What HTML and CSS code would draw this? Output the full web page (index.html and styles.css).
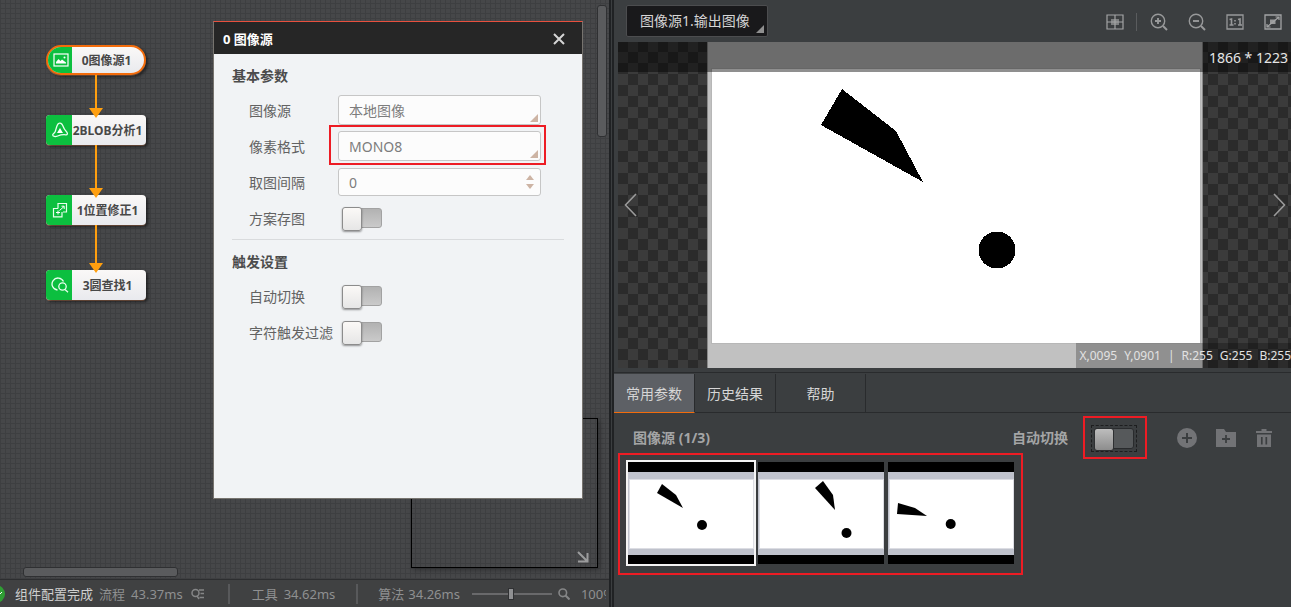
FILE: index.html
```html
<!DOCTYPE html>
<html lang="zh-CN">
<head>
<meta charset="utf-8">
<title>图像源</title>
<link rel="stylesheet" href="styles.css">
</head>
<body>
<div class="app">
  <section class="flow-pane">
    <div class="canvas">
      <div class="node node-source"><span class="node-icon"><svg width="16" height="14" viewBox="0 0 16 14"><rect x="1" y="1" width="14" height="12" fill="none" stroke="#fff" stroke-width="1.2"/><path d="M3 10.500V9l2.500-3 2 2 1.500-1.500 4 3v1z" fill="#fff"/><circle cx="11.500" cy="4.500" r="1" fill="#fff"/></svg></span><span class="node-label">0图像源1</span></div>
      <div class="node node-blob"><span class="node-icon"><svg width="18" height="16" viewBox="0 0 18 16"><path d="M7.500 1.500c1.500-1 3.500 0 4.200 2 .8 2.300 2 4.500 4 6.500 1.300 1.500.8 3-1 2.800-3-.3-5 0-8 1.200-2.500 1-5 .5-5-1 0-1.200 1.600-1.500 2.300-3C5 8 5.500 3 7.500 1.500z" fill="none" stroke="#e9ffee" stroke-width="1.300"/><path d="M9 6l3 5H6z" fill="#fff"/></svg></span><span class="node-label">2BLOB分析1</span></div>
      <div class="node node-fix"><span class="node-icon"><svg width="16" height="16" viewBox="0 0 16 16"><path d="M6 4.500V1.500h8.500v8.500h-3.500M4 6.500H1.500v8.300H10V12M6 4.500v2M4 6.500h2M10 10v2" fill="none" stroke="#e9ffee" stroke-width="1.200"/><path d="M6 8.500v4M4 10.500h4M7.500 8.500L12 4.500M9.500 4.200h2.700V7" fill="none" stroke="#fff"/></svg></span><span class="node-label">1位置修正1</span></div>
      <div class="node node-circle"><span class="node-icon"><svg width="18" height="16" viewBox="0 0 18 16"><path d="M12.500 4.500A6 6 0 1 0 6.500 13" fill="none" stroke="#e9ffee" stroke-width="1.300"/><circle cx="11.500" cy="9.500" r="3.700" fill="none" stroke="#e9ffee" stroke-width="1.300"/><path d="M14 12.500l3 2.700" stroke="#e9ffee" stroke-width="1.300"/></svg></span><span class="node-label">3圆查找1</span></div>
      <svg class="links" width="20" height="200" viewBox="0 0 20 200"><g fill="#ff9f0f"><path d="M9 0h2v34H9zM3 33h14l-7 10z"/><path d="M9 70h2v44H9zM3 113h14l-7 10z"/><path d="M9 150h2v39H9zM3 188h14l-7 10z"/></g></svg>

      <div class="scroll-v"></div>
      <div class="scroll-h"></div>
      <div class="minimap"><svg width="12" height="12" viewBox="0 0 12 12"><path d="M1 1l9 9M1 10.500h9.500V2" fill="none" stroke="#9b9c9d" stroke-width="2"/></svg></div>

      <form class="dialog">
        <header class="dialog-head">
          <h1>0 图像源</h1>
          <button class="close" type="button" aria-label="关闭"><svg width="14" height="14" viewBox="0 0 14 14"><path d="M2 2l10 10M12 2L2 12" stroke="#d5d5d5" stroke-width="2"/></svg></button>
        </header>
        <div class="dialog-body">
          <section class="group">
            <h2>基本参数</h2>
            <div class="row"><label for="src">图像源</label><div class="control corner"><select id="src"><option>本地图像</option></select></div></div>
            <div class="row"><label for="fmt">像素格式</label><div class="control corner"><select id="fmt"><option>MONO8</option></select><span class="mark mark-field"></span></div></div>
            <div class="row"><label for="gap">取图间隔</label><div class="control"><input class="number" id="gap" type="text" value="0"><span class="spin"><button type="button" aria-label="增加"></button><button type="button" aria-label="减少"></button></span></div></div>
            <div class="row"><label for="save">方案存图</label><input class="switch" id="save" type="checkbox"></div>
          </section>
          <section class="group">
            <h2>触发设置</h2>
            <div class="row"><label for="auto">自动切换</label><input class="switch" id="auto" type="checkbox"></div>
            <div class="row"><label for="filter">字符触发过滤</label><input class="switch" id="filter" type="checkbox"></div>
          </section>
        </div>
      </form>
    </div>
    <footer class="status">
      <svg class="ok" width="5" height="18" viewBox="0 0 5 18"><circle cx="-4" cy="9" r="9" fill="#2f9e34"/><path d="M-6 9l3 3 5-5" fill="none" stroke="#fff"/></svg>
      <span class="done">组件配置完成</span>
      <span class="metric">流程<b>43.37ms</b></span>
      <svg class="search-list" width="14" height="12" viewBox="0 0 14 12"><circle cx="4.500" cy="5" r="3.500" fill="none" stroke="#858687" stroke-width="1.500"/><path d="M6 8l2 3M8 2h5M9.500 5.500H13M8.500 9.500H13" fill="none" stroke="#858687" stroke-width="1.400"/></svg>
      <span class="metric divided">工具<b>34.62ms</b></span>
      <span class="metric divided last">算法<b>34.26ms</b></span>
      <input class="zoom" type="range" min="0" max="100" value="49" aria-label="缩放">
      <svg class="lens" width="12" height="12" viewBox="0 0 12 12"><circle cx="4.800" cy="4.800" r="3.800" fill="none" stroke="#858687" stroke-width="1.600"/><path d="M7.500 7.500l4 4" stroke="#858687" stroke-width="2"/></svg>
      <span class="percent">100%</span>
    </footer>
  </section>

  <section class="view-pane">
    <header class="toolbar">
      <button class="output" type="button">图像源1.输出图像</button>
      <div class="tools">
        <button type="button" aria-label="网格"><svg width="18" height="16" viewBox="0 0 18 16"><path d="M1 1h16v14H1zM9 1v14M1 8h16" fill="none" stroke="#a3a4a5" stroke-width="1.200"/><path d="M5 5h8v6H5z" fill="#a3a4a5" opacity=".65"/></svg></button>
        <i class="bar"></i>
        <button type="button" aria-label="放大"><svg width="18" height="18" viewBox="0 0 18 18"><circle cx="8" cy="8" r="6.700" fill="none" stroke="#98999a" stroke-width="1.400"/><path d="M5 8h6M8 5v6" stroke="#98999a" stroke-width="1.900"/><path d="M13 13l4 4" stroke="#98999a" stroke-width="2"/></svg></button>
        <button type="button" aria-label="缩小"><svg width="18" height="18" viewBox="0 0 18 18"><circle cx="8" cy="8" r="6.700" fill="none" stroke="#98999a" stroke-width="1.400"/><path d="M5 8h6" stroke="#98999a" stroke-width="1.900"/><path d="M13 13l4 4" stroke="#98999a" stroke-width="2"/></svg></button>
        <button type="button" aria-label="原始大小"><svg width="18" height="16" viewBox="0 0 18 16"><path d="M1 1h16v14H1z" fill="none" stroke="#98999a" stroke-width="1.300"/><path d="M3.500 5.500L5.500 5v6M12 5.500l2-.5v6M3.500 11h4M12 11h4M9 6v1.500M9 9v1.500" fill="none" stroke="#98999a" stroke-width="1.600"/></svg></button>
        <button type="button" aria-label="适应窗口"><svg width="18" height="16" viewBox="0 0 18 16"><path d="M1 1h16v14H1z" fill="none" stroke="#a3a4a5" stroke-width="1.300"/><path d="M6 5.500h5.500V10H6z" fill="#98999a"/><path d="M3 13L15 3M11.500 3H15v3M3 10v3h3.500" fill="none" stroke="#a3a4a5" stroke-width="1.200"/></svg></button>
      </div>
    </header>

    <div class="viewer">
      <svg class="picture" viewBox="0 0 496 326" preserveAspectRatio="none"><rect width="496" height="326" fill="#c1c1c1"/><path d="M.5 0v326M495.500 0v326" stroke="#8a8a8a"/><path d="M4 26h490v276H4z" fill="#b7b7b7"/><path d="M5 27h488v274H5z" fill="#fff"/><g shape-rendering="crispEdges"><path d="M135 47L114 83l102 57-27-51z"/><circle cx="290" cy="208" r="18.500"/></g></svg>
      <div class="size">1866 * 1223</div>
      <button class="prev" type="button" aria-label="上一张"><svg width="14" height="24" viewBox="0 0 14 24"><path d="M12 1L1.500 12 12 23" fill="none" stroke="#9a9a9a" stroke-width="1.600"/></svg></button>
      <button class="next" type="button" aria-label="下一张"><svg width="14" height="24" viewBox="0 0 14 24"><path d="M2 1l10.500 11L2 23" fill="none" stroke="#9a9a9a" stroke-width="1.600"/></svg></button>
      <div class="pixel"><span>X,0095</span><span>Y,0901</span><span>|</span><span>R:255</span><span>G:255</span><span>B:255</span></div>
    </div>

    <nav class="tabs">
      <button class="tab active" type="button">常用参数</button>
      <button class="tab" type="button">历史结果</button>
      <button class="tab wide" type="button">帮助</button>
    </nav>

    <div class="panel">
      <div class="panel-head">
        <h2>图像源 (1/3)</h2>
        <label for="loop">自动切换</label>
        <span class="loop"><input class="switch dark" id="loop" type="checkbox"><span class="mark mark-loop"></span></span>
        <button type="button" aria-label="添加图像"><svg width="20" height="20" viewBox="0 0 20 20"><circle cx="10" cy="10" r="10" fill="#727376"/><path d="M10 5v10M5 10h10" stroke="#3b3e40" stroke-width="2"/></svg></button>
        <button type="button" aria-label="添加文件夹"><svg width="20" height="18" viewBox="0 0 20 18"><path d="M0 0h8l2 3h10v15H0z" fill="#727376"/><path d="M10 6v8M6 10h8" stroke="#3b3e40" stroke-width="1.800"/></svg></button>
        <button type="button" aria-label="删除"><svg width="18" height="20" viewBox="0 0 18 20"><path d="M6.500 1h5v2H17v2H1V3h5.500zM2 6.500h14V19H2z" fill="#727376"/><path d="M6.800 9v7.500M11.300 9v7.500" stroke="#3b3e40" stroke-width="1.700"/></svg></button>
      </div>
      <div class="thumbs">
        <button class="thumb selected" type="button" aria-label="图像 1"><svg width="126" height="102" viewBox="0 0 126 102"><path d="M0 0h126v102H0z"/><path d="M0 10h126v83H0z" fill="#bfc2cc"/><path d="M1 17h125v70H1z" fill="#dcdde3"/><path d="M2 18h123v68H2z" fill="#fff"/><path d="M34 22l-5 9 26 15-7-13z"/><circle cx="74" cy="63" r="5"/></svg></button>
        <button class="thumb" type="button" aria-label="图像 2"><svg width="126" height="102" viewBox="0 0 126 102"><path d="M0 0h126v102H0z"/><path d="M0 10h126v83H0z" fill="#bfc2cc"/><path d="M1 17h125v70H1z" fill="#dcdde3"/><path d="M2 18h123v68H2z" fill="#fff"/><path d="M65 19l-8 7 20 22-2-15z"/><circle cx="88.500" cy="71" r="5"/></svg></button>
        <button class="thumb" type="button" aria-label="图像 3"><svg width="126" height="102" viewBox="0 0 126 102"><path d="M0 0h126v102H0z"/><path d="M0 10h126v83H0z" fill="#bfc2cc"/><path d="M1 17h125v70H1z" fill="#dcdde3"/><path d="M2 18h123v68H2z" fill="#fff"/><path d="M10 41l-1 11 30 2-12-8z"/><circle cx="62.700" cy="62" r="5"/></svg></button>
        <span class="mark mark-thumbs"></span>
      </div>
    </div>
  </section>
</div>
</body>
</html>
```
FILE: styles.css
```css
* { box-sizing: border-box; }

body {
  margin: 0;
  font: 14px/20px "Noto Sans", "Noto Sans CJK SC", sans-serif;
  background: #3b3e40;
}

h1, h2 { margin: 0; font-size: 14px; line-height: 20px; font-weight: 700; }
svg { display: block; }

button, input, select { font: inherit; margin: 0; }
button { padding: 0; border: 0; background: none; color: inherit; }

.app {
  display: grid;
  grid-template-columns: minmax(0, 614fr) minmax(0, 677fr);
  height: 100vh;
}

/* flow editor */
.flow-pane {
  display: flex;
  flex-direction: column;
  min-height: 0;
  border-right: 5px double #202224;
  overflow: hidden;
}

.canvas {
  position: relative;
  flex: 1;
  min-height: 0;
  background:
    repeating-linear-gradient(0deg, #3e3f41 0 1px, transparent 1px 5px),
    repeating-linear-gradient(90deg, #3e3f41 0 1px, transparent 1px 5px),
    #464749;
}

.node {
  position: absolute;
  left: 46px;
  display: flex;
  width: 100px;
  height: 30px;
  border-radius: 4px;
  overflow: hidden;
  background: linear-gradient(#faf8f7, #e9eaee);
  box-shadow: 2px 2px 3px rgba(0, 0, 0, .5), 0 1px 0 #a8775c;
  color: #484848;
  font-size: 12px;
  font-weight: 700;
}
.node-source { top: 45px; border: 2px solid #f36c0c; border-radius: 15px; }
.node-blob { top: 115px; }
.node-fix { top: 195px; }
.node-circle { top: 270px; }
.node-icon {
  display: flex;
  flex: 0 0 26px;
  align-items: center;
  justify-content: center;
  padding-left: 2px;
  background: #0cbf3f;
}
.node-source .node-icon { flex-basis: 24px; }
.node-label {
  display: flex;
  flex: 1;
  align-items: center;
  justify-content: center;
  padding: 2px 3px 0 0;
  white-space: nowrap;
}
.links { position: absolute; left: 86px; top: 75px; }

.scroll-v, .scroll-h {
  position: absolute;
  border: 1px solid #2f3032;
  border-radius: 3px;
  background: #5a5b5d;
}
.scroll-v { top: 5px; right: 2px; width: 10px; height: 132px; }
.scroll-h { left: 23px; bottom: 2px; width: 155px; height: 10px; }

.minimap {
  position: absolute;
  right: 11px;
  bottom: 11px;
  display: flex;
  align-items: flex-end;
  justify-content: flex-end;
  width: 187px;
  height: 150px;
  padding: 0 8px 4px;
  border: 1px solid #000;
  box-shadow: 2px 2px 5px rgba(0, 0, 0, .3);
}

/* parameter dialog */
.dialog {
  position: absolute;
  left: 213px;
  top: 21px;
  width: 370px;
  height: 478px;
  border: 1px solid #76736e;
  border-top-color: #e8503e;
  background: #f1f3f5;
  color: #626262;
}
.dialog-head {
  display: flex;
  align-items: center;
  justify-content: space-between;
  height: 32px;
  padding: 1px 16px 0 9px;
  background: #262626;
  color: #fff;
}
.dialog-head h1 { font-size: 13px; }
.dialog-body { padding: 0 18px; }
.group { display: flex; flex-direction: column; gap: 6px; padding: 12px 0 6px; }
.group + .group { border-top: 1px solid #d9dbdd; }
.group h2 { margin-bottom: 3px; color: #4c4c4c; }
.row { display: flex; align-items: center; height: 30px; padding-left: 17px; }
.row label { flex: 0 0 89px; padding-top: 1px; white-space: nowrap; }
.control { position: relative; width: 203px; }
.control select, .number {
  display: block;
  width: 100%;
  height: 30px;
  padding: 1px 10px 0;
  border: 1px solid #c6c6c6;
  border-radius: 3px;
  background: #fcfcfc;
  color: #7d7d7d;
  appearance: none;
}
.control .number { height: 28px; }
.corner::after {
  content: "";
  position: absolute;
  right: 3px;
  bottom: 3px;
  border: 4px solid #cdb4a4;
  border-top-color: transparent;
  border-left-color: transparent;
}
.spin {
  position: absolute;
  right: 7px;
  top: 7px;
  display: flex;
  flex-direction: column;
  gap: 4px;
}
.spin button { width: 8px; height: 5px; background: #cdb4a4; clip-path: polygon(50% 0, 100% 100%, 0 100%); }
.spin button + button { clip-path: polygon(0 0, 100% 0, 50% 100%); }

.switch {
  width: 40px;
  height: 20px;
  margin-left: 4px;
  border: 1px solid #a2a2a2;
  border-radius: 3px;
  background: linear-gradient(#b2b2b2, #cacaca);
  appearance: none;
}
.switch::before {
  content: "";
  display: block;
  width: 18px;
  height: 22px;
  margin: -2px -1px;
  border: 1px solid #8c8c8c;
  border-radius: 3px;
  background: linear-gradient(#fbf9f7, #e6e6e6);
  box-shadow: 0 1px 2px rgba(0, 0, 0, .4);
}
.switch.dark { height: 21px; margin: 0; border-color: #292b2d; background: #56595b; }
.switch.dark::before {
  height: 21px;
  margin: -1px;
  border-color: #2e3032;
  background: linear-gradient(#bdbdbd, #8d8d8d);
  box-shadow: none;
}

.mark { position: absolute; border: 2px solid #ed1c24; pointer-events: none; }
.mark-field { inset: -6px -5px -4px -9px; z-index: 1; }
.mark-loop { inset: -10px -11px -8px -9px; }
.mark-thumbs { inset: -7px auto -9px -8px; width: 405px; }

/* status bar */
.status {
  display: flex;
  align-items: center;
  height: 28px;
  border-top: 1px solid #2d2e30;
  background: #404142;
  color: #8f9091;
  font-size: 13px;
  white-space: nowrap;
  overflow: hidden;
}
.status > * { flex: none; }
.done { margin: 0 6px 0 10px; color: #cfcfcf; }
.metric { display: flex; gap: 6px; }
.metric b { font-weight: 400; }
.search-list { margin: 0 23px 0 8px; }
.divided { margin-right: 21px; padding-left: 22px; border-left: 2px solid #58595b; }
.divided.last { gap: 4px; margin-right: 12px; padding-left: 20px; }
.zoom { width: 80px; height: 16px; margin-right: 6px; background: none; appearance: none; }
.zoom::-webkit-slider-runnable-track { height: 2px; background: #69696b; }
.zoom::-webkit-slider-thumb {
  width: 6px;
  height: 12px;
  margin-top: -5px;
  border: 1px solid #303133;
  background: #8f9092;
  appearance: none;
}
.status .percent { flex: 0 1 25px; margin-left: 11px; overflow: hidden; }

/* image view */
.view-pane { display: flex; flex-direction: column; min-width: 0; min-height: 0; color: #d6d6d6; }
.toolbar {
  display: flex;
  align-items: center;
  justify-content: space-between;
  height: 42px;
  padding: 0 9px 0 12px;
}
.output {
  position: relative;
  height: 32px;
  padding: 0 17px 0 13px;
  border: 1px solid #4c4d4f;
  border-radius: 2px;
  background: #19191b;
}
.output::after {
  content: "";
  position: absolute;
  right: 3px;
  bottom: 3px;
  border: 4px solid #8f8f8f;
  border-top-color: transparent;
  border-left-color: transparent;
}
.tools { display: flex; align-items: center; gap: 20px; padding-top: 1px; }
.tools .bar { width: 1px; height: 18px; margin: 0 -7px 0 -8px; background: #5a5c5e; }

.viewer {
  position: relative;
  display: flex;
  flex: 1;
  min-height: 0;
  margin-left: 4px;
  padding: 0 88px 0 89px;
  background: repeating-conic-gradient(#3b3b3b 0 25%, #2b2b2b 0 50%) 0 -1px / 20px 22px;
  overflow: hidden;
}
.picture { flex: 1; min-width: 0; height: 100%; }
.size {
  position: absolute;
  inset: 0 0 auto;
  height: 30px;
  padding-right: 3px;
  background: rgba(0, 0, 0, .44);
  color: #e6e6e6;
  line-height: 32px;
  text-align: right;
}
.prev, .next { position: absolute; top: 50%; margin-top: -12px; }
.prev { left: 6px; }
.next { right: 5px; }
.pixel {
  position: absolute;
  right: 0;
  bottom: 0;
  display: flex;
  gap: 7px;
  height: 25px;
  padding-left: 3px;
  background: rgba(0, 0, 0, .25);
  color: #e2e2e2;
  font-size: 12px;
  line-height: 25px;
}

.tabs {
  display: flex;
  height: 45px;
  padding-top: 1px;
  border-bottom: 1px solid #292b2d;
  background: linear-gradient(transparent 4px, #292b2d 4px 5px, transparent 5px);
}
.tab { width: 81px; margin-top: 5px; margin-bottom: -1px; border-right: 1px solid #292b2d; }
.tab.wide { width: 90px; }
.tab.active { padding-top: 1px; border-bottom: 1px solid #f36c0c; background: #5d6065; }

.panel { padding: 0 18px 41px 12px; }
.panel-head {
  display: flex;
  align-items: center;
  height: 47px;
  padding: 3px 0 0 7px;
  color: #a4a5a6;
  font-weight: 700;
}
.panel-head h2 { flex: 1; }
.panel-head button { margin-left: 19px; }
.loop {
  position: relative;
  margin: 0 21px 0 23px;
  padding: 2px;
  border: 1px dashed #1d1e1f;
}
.loop .switch { display: block; }
.thumbs { position: relative; display: flex; }
.thumb { border: 2px solid transparent; }
.thumb.selected { border-color: #f4f4f4; }
```
